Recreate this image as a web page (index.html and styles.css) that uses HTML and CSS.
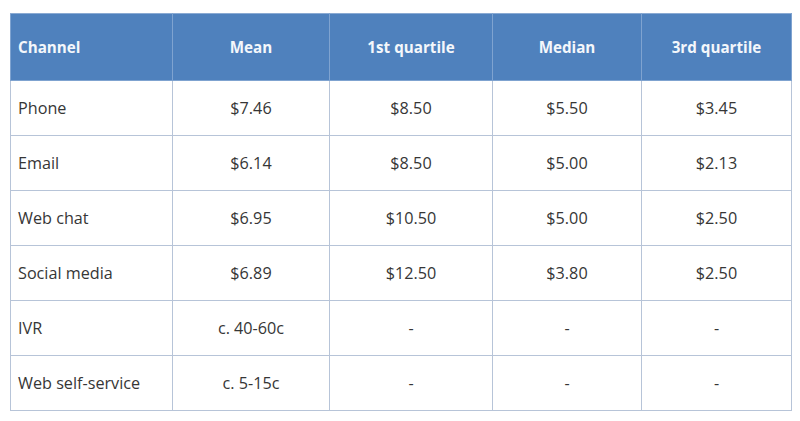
FILE: index.html
```html
<!DOCTYPE html>
<html>
<head>
<meta charset="utf-8">
<link rel="stylesheet" href="styles.css">
</head>
<body>
<table class="cost-table">
  <colgroup>
    <col class="c1"><col class="c2"><col class="c3"><col class="c4"><col class="c5">
  </colgroup>
  <thead>
    <tr>
      <th class="left">Channel</th>
      <th>Mean</th>
      <th>1st quartile</th>
      <th>Median</th>
      <th>3rd quartile</th>
    </tr>
  </thead>
  <tbody>
    <tr><td class="left">Phone</td><td>$7.46</td><td>$8.50</td><td>$5.50</td><td>$3.45</td></tr>
    <tr><td class="left">Email</td><td>$6.14</td><td>$8.50</td><td>$5.00</td><td>$2.13</td></tr>
    <tr><td class="left">Web chat</td><td>$6.95</td><td>$10.50</td><td>$5.00</td><td>$2.50</td></tr>
    <tr><td class="left">Social media</td><td>$6.89</td><td>$12.50</td><td>$3.80</td><td>$2.50</td></tr>
    <tr><td class="left">IVR</td><td>c. 40-60c</td><td>-</td><td>-</td><td>-</td></tr>
    <tr><td class="left">Web self-service</td><td>c. 5-15c</td><td>-</td><td>-</td><td>-</td></tr>
  </tbody>
</table>
</body>
</html>
```
FILE: styles.css
```css
html, body {
  margin: 0;
  padding: 0;
  background: #ffffff;
}
body {
  padding: 13px 0 0 10px;
  font-family: "Open Sans", "Noto Sans", sans-serif;
}
.cost-table {
  border-collapse: collapse;
  table-layout: fixed;
  width: 781px;
}
.c1 { width: 162px; }
.c2 { width: 157px; }
.c3 { width: 163px; }
.c4 { width: 149px; }
.c5 { width: 150px; }
.cost-table th {
  background: #4f81bd;
  color: #f4f7fb;
  font-weight: 700;
  font-size: 15.2px;
  height: 66px;
  padding: 0 7px;
  text-align: center;
  border: 1px solid #7fa3d0;
  border-top-color: #8aaad3;
}
.cost-table td {
  color: #363636;
  font-size: 16.2px;
  height: 54px;
  padding: 0 7px;
  text-align: center;
  border: 1px solid #b7c4d8;
}
.cost-table .left {
  text-align: left;
}
```
